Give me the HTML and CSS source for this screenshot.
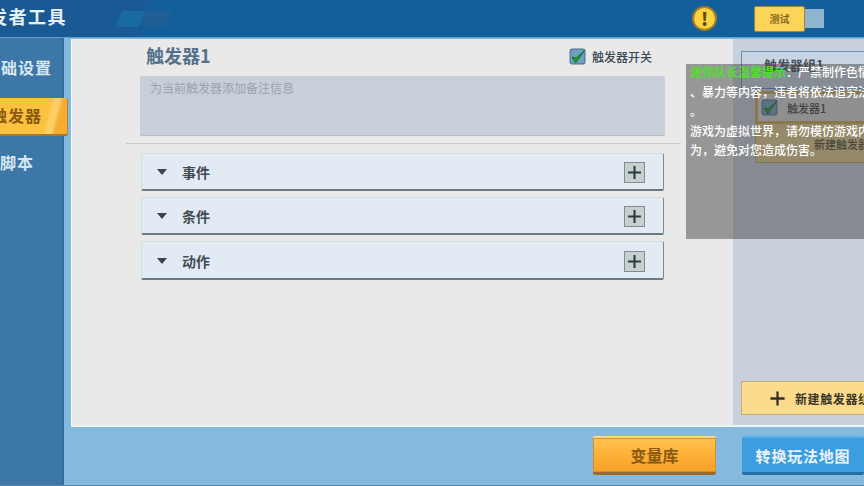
FILE: index.html
```html
<!DOCTYPE html>
<html lang="zh">
<head>
<meta charset="utf-8">
<title>开发者工具</title>
<link rel="stylesheet" href="styles.css">
</head>
<body>
<div class="app">
  <header class="header">
    <div class="app-title"><span>开发者工具</span></div>
    <div class="stripes"><i></i><i></i></div>
    <div class="warn">!</div>
    <button class="test-btn">测试</button>
    <div class="test-side"></div>
  </header>
  <div class="main">
    <nav class="sidebar">
      <div class="nav nav-a"><span>基础设置</span></div>
      <div class="nav nav-b active"><span>触发器</span></div>
      <div class="nav nav-c"><span>脚本</span></div>
    </nav>
    <div class="content">
      <div class="panel">
        <section class="editor">
          <div class="editor-head">
            <h1 class="trigger-name">触发器1</h1>
            <label class="switch">
              <svg class="check" viewBox="0 0 16 16"><rect x="1" y="1" width="14" height="14" rx="2" fill="#6e9fc0" stroke="#4a6f8c"/><path d="M3 8.5l3.2 5.5L14.5 2.5 6.8 9.5z" fill="#12a82c" stroke="#0c5e1c" stroke-width=".8"/></svg>
              <span>触发器开关</span>
            </label>
          </div>
          <div class="note">为当前触发器添加备注信息</div>
          <div class="divider"></div>
          <div class="rows">
            <div class="row"><i class="caret"></i><span class="row-label">事件</span><span class="plus"><svg viewBox="0 0 22 22"><path d="M3.5 11h15M11 3.5v15" stroke="#2d3a3c" stroke-width="2.4"/></svg></span></div>
            <div class="row"><i class="caret"></i><span class="row-label">条件</span><span class="plus"><svg viewBox="0 0 22 22"><path d="M3.5 11h15M11 3.5v15" stroke="#2d3a3c" stroke-width="2.4"/></svg></span></div>
            <div class="row row-last"><i class="caret"></i><span class="row-label">动作</span><span class="plus"><svg viewBox="0 0 22 22"><path d="M3.5 11h15M11 3.5v15" stroke="#2d3a3c" stroke-width="2.4"/></svg></span></div>
          </div>
        </section>
        <aside class="groups">
          <div class="group-card">触发器组1</div>
          <div class="group-body">
            <div class="trigger-item">
              <svg class="check" viewBox="0 0 16 16"><rect x="1" y="1" width="14" height="14" rx="2" fill="#6e9fc0" stroke="#4a6f8c"/><path d="M3 8.5l3.2 5.5L14.5 2.5 6.8 9.5z" fill="#12a82c" stroke="#0c5e1c" stroke-width=".8"/></svg>
              <span>触发器1</span>
            </div>
            <div class="new-trigger">新建触发器</div>
          </div>
          <div class="new-group"><svg viewBox="0 0 18 18"><path d="M1.5 9h15M9 1.5v15" stroke="#33302a" stroke-width="2.4"/></svg><span>新建触发器组</span></div>
        </aside>
      </div>
      <footer class="footer">
        <button class="btn btn-orange">变量库</button>
        <button class="btn btn-blue">转换玩法地图</button>
      </footer>
    </div>
  </div>
  <div class="notice">
    <p class="notice-first"><b>迷你队长温馨提示</b>：严禁制作色情</p>
    <p>、暴力等内容，违者将依法追究法律责任</p>
    <p>。</p>
    <p>游戏为虚拟世界，请勿模仿游戏内的行</p>
    <p>为，避免对您造成伤害。</p>
  </div>
</div>
</body>
</html>
```
FILE: styles.css
```css
* { box-sizing: border-box; }
html, body { margin: 0; padding: 0; }
body { font-family: "Noto Sans CJK SC", "Noto Sans", sans-serif; }
.app { position: relative; width: 864px; height: 486px; overflow: hidden; display: flex; flex-direction: column; background: #85bade; border-bottom: 1px solid #4f86ad; }

.header { height: 38px; flex: none; display: flex; align-items: center; border-bottom: 1px solid #5f9fcb; background: linear-gradient(105deg, #1a5a94 0, #1a5a94 138px, #135f9b 150px, #135f9b 100%); }
.app-title { width: 66px; flex: none; display: flex; justify-content: flex-end; overflow: hidden; }
.app-title span { flex: none; font-size: 18px; font-weight: 700; color: #e8f1f6; letter-spacing: 1.5px; margin-right: -1px; line-height: 28px; padding-bottom: 6px; }
.stripes { display: flex; gap: 2px; margin-left: 53px; flex: none; }
.stripes i { display: block; width: 25px; height: 16px; background: #1f5f95; transform: skewX(-22deg); }
.stripes i:first-child { background: #1a6aa2; width: 23px; }
.warn { margin-left: 523px; width: 25px; height: 25px; flex: none; border-radius: 50%; background: #fcd23e; border: 2px solid #a57c22; color: #5b4a17; font-size: 18px; font-weight: 900; line-height: 20px; text-align: center; }
.test-btn { margin-left: 37px; width: 51px; height: 26px; padding: 0; flex: none; border: 1px solid #a8802e; border-radius: 2px; background: #fcd45a; color: #8a6a1c; font: 700 10px "Noto Sans CJK SC", sans-serif; }
.test-side { width: 19px; height: 19px; flex: none; background: #8db5cf; }

.main { flex: 1; display: flex; min-height: 0; }
.sidebar { width: 64px; flex: none; position: relative; z-index: 1; background: #3d77a8; border-right: 2px solid #336b99; padding-top: 11px; display: flex; flex-direction: column; }
.nav { height: 38px; flex: none; display: flex; justify-content: flex-end; align-items: center; padding-bottom: 2px; color: #d8e8f2; font-size: 16px; font-weight: 700; overflow: hidden; letter-spacing: 1px; }
.nav span { flex: none; }
.nav-a { width: 52px; }
.nav-b { width: 68px; margin-top: 11px; padding-right: 25px; }
.nav-c { width: 34px; margin-top: 7px; padding-bottom: 0; }
.active { color: #8c5a10; background: linear-gradient(105deg, #fcc23f 0, #fcc23f 50px, #fdd064 54px, #fdd064 58px, #f6ad30 62px); border-right: 1px solid #b5812c; border-bottom: 2px solid #a8762a; border-radius: 0 2px 2px 0; }

.content { flex: 1; min-width: 0; padding: 1px 0 0 7px; display: flex; flex-direction: column; }
.panel { height: 388px; flex: none; display: flex; background: #e9e9e9; border-left: 1px solid #f6fbfe; border-bottom: 2px solid #eaf5fb; }

.editor { width: 661px; flex: none; padding: 3px 53px 0 54px; }
.editor-head { height: 34px; padding: 0 28px 5px 20px; display: flex; align-items: center; justify-content: space-between; }
.trigger-name { margin: 0 0 4px; font-size: 18px; font-weight: 700; color: #54708a; line-height: 26px; }
.switch { display: flex; align-items: center; gap: 6px; font-size: 12px; font-weight: 500; color: #3c4a54; }
.check { width: 17px; height: 17px; flex: none; }
.note { margin-left: 14px; width: 525px; height: 60px; padding: 3px 10px; border-radius: 2px; border-bottom: 1px solid #b4bcc6; background: #c8cfd9; color: #9aa3ae; font-size: 12px; line-height: 18px; }
.divider { width: 555px; height: 1px; margin-top: 7px; background: #c6ced0; }
.rows { margin: 9px 0 0 15px; width: 523px; display: flex; flex-direction: column; gap: 6px; }
.row { height: 38px; display: flex; align-items: center; padding: 0 18px 0 15px; background: #e2eaf3; border: 1px solid #cfdfe0; border-bottom: 2px solid #6a7a80; border-right-color: #7c8a90; border-radius: 2px; }
.row-last { height: 39px; padding-top: 1px; }
.caret { width: 0; height: 0; border-left: 5px solid transparent; border-right: 5px solid transparent; border-top: 6px solid #3a4450; flex: none; }
.row-label { margin-left: 15px; font-size: 14px; font-weight: 700; color: #404a54; flex: 1; }
.plus { width: 21px; height: 21px; margin-top: 2px; flex: none; display: block; background: #c6d0d0; border: 1px solid #7f8c90; }
.plus svg { display: block; width: 19px; height: 19px; }

.groups { flex: 1; min-width: 0; overflow: hidden; background: #c8d0dc; padding: 12px 0 0 8px; display: flex; flex-direction: column; }
.group-card { width: 160px; height: 38px; flex: none; border: 1px solid #5f8fb5; background: #c8d4e2; color: #45505a; font-size: 13px; font-weight: 700; padding-left: 22px; line-height: 26px; }
.group-body { margin-left: 14px; width: 160px; flex: none; margin-top: 2px; }
.trigger-item { height: 33px; border: 3px solid #c8a84e; background: #d8d8d8; display: flex; align-items: center; gap: 9px; padding-left: 3px; font-size: 11px; font-weight: 500; color: #3a3f45; }
.new-trigger { height: 39px; border: 1px solid #b9a262; border-top: 0; background: #e2cd8c; font-size: 11px; font-weight: 500; color: #4a4630; padding-left: 58px; line-height: 40px; }
.new-group { margin-top: auto; margin-bottom: 10px; width: 160px; height: 34px; flex: none; display: flex; align-items: center; gap: 9px; padding-left: 27px; background: #fadc8c; border: 1px solid #c2ad72; color: #3a3528; font-size: 12px; font-weight: 700; letter-spacing: .6px; white-space: nowrap; }
.new-group svg { width: 17px; height: 17px; flex: none; }

.footer { flex: 1; display: flex; padding: 9px 0 0 522px; gap: 26px; align-items: flex-start; }
.btn { height: 39px; flex: none; border: 0; padding: 0; border-radius: 2px; font: 700 16px "Noto Sans CJK SC", sans-serif; }
.btn-orange { width: 123px; color: #8a5a10; background: linear-gradient(#ffc453, #fba92e 70%, #f6a02a); border-top: 2px solid #f9d88a; border-bottom: 3px solid #9a6a2a; box-shadow: 0 0 0 1px #d08f30 inset; }
.btn-blue { width: 122px; font-size: 15px; color: #e8f3fb; background: #3c9de0; border-top: 2px solid #58aee8; border-bottom: 3px solid #276fa8; letter-spacing: .8px; }

.notice { position: absolute; left: 686px; top: 64px; width: 178px; height: 175px; padding-left: 4px; overflow: hidden; background: rgba(70, 70, 70, .5); color: #fff; font-size: 12px; font-weight: 500; line-height: 19.5px; }
.notice p { margin: 0; white-space: nowrap; }
.notice .notice-first { margin-top: -2px; }
.notice b { color: #4fe02a; font-weight: 700; }
```
